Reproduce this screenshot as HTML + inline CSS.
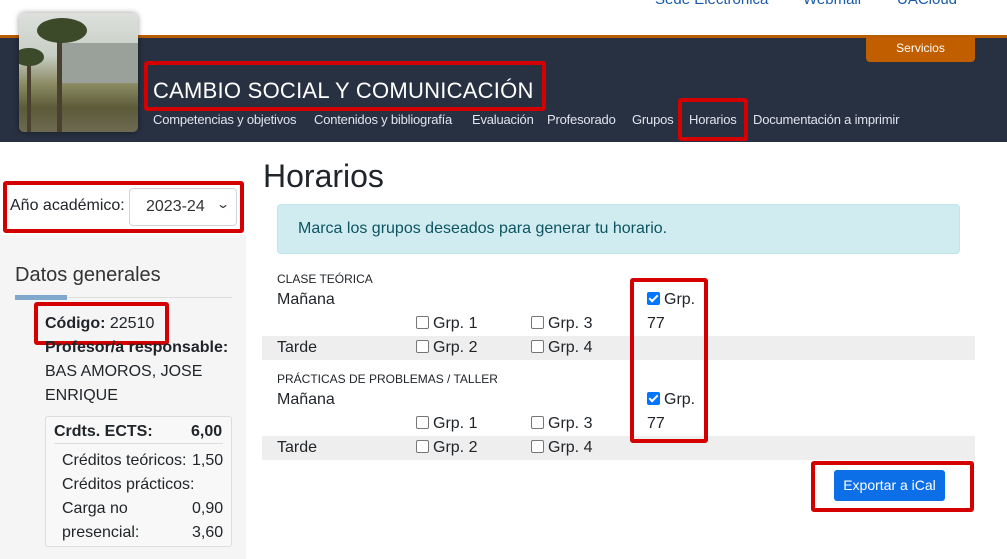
<!DOCTYPE html>
<html><head><meta charset="utf-8"><style>
*{margin:0;padding:0;box-sizing:border-box}
body{width:1007px;height:559px;overflow:hidden;position:relative;background:#fff;font-family:"Liberation Sans",sans-serif;color:#212529}
.a{position:absolute;white-space:nowrap}
.rb{position:absolute;border:4px solid #d40000;border-radius:3px}
.cb{display:inline-block;width:13px;height:13px;border:1px solid #767676;border-radius:2px;background:#fff;vertical-align:-1px;margin-right:4px}
.ck{display:inline-block;width:13px;height:13px;border-radius:2px;background:#0075ff;vertical-align:-1px;margin-right:4px;position:relative}
.ck:after{content:"";position:absolute;left:4px;top:1px;width:3px;height:7px;border:solid #fff;border-width:0 2px 2px 0;transform:rotate(45deg)}
.f16{font-size:16px}
.n{position:absolute;top:112px;font-size:13px;letter-spacing:-0.2px;color:#dfe4ee;white-space:nowrap}
</style></head><body>
<div class="a" style="left:655px;top:-9px;font-size:15px;color:#1a5aa8">Sede Electrónica</div>
<div class="a" style="left:803px;top:-9px;font-size:15px;color:#1a5aa8">Webmail</div>
<div class="a" style="left:897px;top:-9px;font-size:15px;color:#1a5aa8">UACloud</div>
<div class="a" style="left:0;top:35px;width:1007px;height:3px;background:#b85c00"></div>
<div class="a" style="left:0;top:38px;width:1007px;height:104px;background:#283142"></div>
<div class="a" style="left:866px;top:37px;width:109px;height:25px;background:#c05e00;border-radius:0 0 4px 4px;color:#fff;font-size:12px;text-align:center;line-height:22px">Servicios</div>
<div class="a" style="left:19px;top:13px;width:119px;height:119px;border-radius:5px;background:linear-gradient(180deg,#dde0dc 0%,#c8cfc6 35%,#8a8a62 60%,#5c5a38 80%,#6d6a52 100%);box-shadow:0 0 6px rgba(0,0,0,.4);overflow:hidden">
<div style="position:absolute;left:40px;top:30px;width:79px;height:40px;background:#9aa09a"></div>
<div style="position:absolute;left:38px;top:10px;width:5px;height:110px;background:#4a4030"></div>
<div style="position:absolute;left:18px;top:5px;width:50px;height:25px;border-radius:50%;background:#3c4a2a"></div>
<div style="position:absolute;left:8px;top:40px;width:4px;height:80px;background:#4a4030"></div>
<div style="position:absolute;left:-5px;top:35px;width:30px;height:18px;border-radius:50%;background:#3c4a2a"></div>
</div>
<div class="a" style="left:153px;top:78px;font-size:22px;letter-spacing:0.25px;color:#fff">CAMBIO SOCIAL Y COMUNICACIÓN</div>
<div class="rb" style="left:144px;top:61px;width:402px;height:50px"></div>
<div class="n" style="left:153px">Competencias y objetivos</div>
<div class="n" style="left:314px">Contenidos y bibliografía</div>
<div class="n" style="left:472px">Evaluación</div>
<div class="n" style="left:547px">Profesorado</div>
<div class="n" style="left:632px">Grupos</div>
<div class="n" style="left:689px">Horarios</div>
<div class="n" style="left:753px">Documentación a imprimir</div>
<div class="rb" style="left:678px;top:98px;width:70px;height:43px"></div>

<div class="a" style="left:0;top:235px;width:246px;height:324px;background:#f5f5f5"></div>
<div class="a f16" style="left:10px;top:197px">Año académico:</div>
<div class="a" style="left:129px;top:188px;width:108px;height:38px;border:1px solid #ced4da;border-radius:4px;background:#fff;font-size:16px;color:#333;padding:9px 0 0 16px">2023-24<span style="position:absolute;right:8px;top:8px;font-size:12px;transform:scaleX(1.4)">⌄</span></div>
<div class="rb" style="left:3px;top:181px;width:241px;height:52px"></div>
<div class="a" style="left:15px;top:264px;font-size:20px;color:#333">Datos generales</div>
<div class="a" style="left:15px;top:297px;width:217px;height:1px;background:#ddd"></div>
<div class="a" style="left:15px;top:295px;width:52px;height:5px;background:#7fa8cc"></div>
<div class="a f16" style="left:45px;top:315px"><b>Código:</b> 22510</div>
<div class="rb" style="left:34px;top:302px;width:135px;height:43px"></div>
<div class="a f16" style="left:45px;top:339px;font-weight:bold">Profesor/a responsable:</div>
<div class="a f16" style="left:45px;top:363px">BAS AMOROS, JOSE</div>
<div class="a f16" style="left:45px;top:387px">ENRIQUE</div>
<div class="a" style="left:45px;top:416px;width:187px;height:131px;border:1px solid #ddd;border-radius:3px;background:#f8f8f8"></div>
<div class="a f16" style="left:54px;top:423px;font-weight:bold">Crdts. ECTS:</div>
<div class="a f16" style="left:191px;top:423px;font-weight:bold">6,00</div>
<div class="a" style="left:54px;top:443px;width:169px;height:1px;background:#ddd"></div>
<div class="a f16" style="left:62px;top:452px">Créditos teóricos:</div><div class="a f16" style="left:192px;top:452px">1,50</div>
<div class="a f16" style="left:62px;top:476px">Créditos prácticos:</div>
<div class="a f16" style="left:62px;top:500px">Carga no</div><div class="a f16" style="left:192px;top:500px">0,90</div>
<div class="a f16" style="left:62px;top:524px">presencial:</div><div class="a f16" style="left:192px;top:524px">3,60</div>

<div class="a" style="left:263px;top:158px;font-size:32px">Horarios</div>
<div class="a" style="left:277px;top:204px;width:683px;height:50px;background:#d1ecf1;border:1px solid #bee5eb;border-radius:4px;color:#0c5460;font-size:16px;padding:15px 0 0 20px">Marca los grupos deseados para generar tu horario.</div>

<div class="a" style="left:262px;top:336px;width:713px;height:24px;background:#eee"></div>
<div class="a" style="left:262px;top:436px;width:713px;height:24px;background:#eee"></div>
<div class="a" style="left:277px;top:272px;font-size:12px">CLASE TEÓRICA</div>
<div class="a f16" style="left:277px;top:291px">Mañana</div>
<div class="a f16" style="left:647px;top:291px"><span class="ck"></span>Grp.</div>
<div class="a f16" style="left:416px;top:315px"><span class="cb"></span>Grp. 1</div>
<div class="a f16" style="left:531px;top:315px"><span class="cb"></span>Grp. 3</div>
<div class="a f16" style="left:647px;top:315px">77</div>
<div class="a f16" style="left:277px;top:339px">Tarde</div>
<div class="a f16" style="left:416px;top:339px"><span class="cb"></span>Grp. 2</div>
<div class="a f16" style="left:531px;top:339px"><span class="cb"></span>Grp. 4</div>
<div class="a" style="left:277px;top:372px;font-size:12px">PRÁCTICAS DE PROBLEMAS / TALLER</div>
<div class="a f16" style="left:277px;top:391px">Mañana</div>
<div class="a f16" style="left:647px;top:391px"><span class="ck"></span>Grp.</div>
<div class="a f16" style="left:416px;top:415px"><span class="cb"></span>Grp. 1</div>
<div class="a f16" style="left:531px;top:415px"><span class="cb"></span>Grp. 3</div>
<div class="a f16" style="left:647px;top:415px">77</div>
<div class="a f16" style="left:277px;top:439px">Tarde</div>
<div class="a f16" style="left:416px;top:439px"><span class="cb"></span>Grp. 2</div>
<div class="a f16" style="left:531px;top:439px"><span class="cb"></span>Grp. 4</div>
<div class="rb" style="left:630px;top:278px;width:78px;height:165px"></div>
<div class="a" style="left:834px;top:470px;width:111px;height:31px;background:#0d6fe8;border-radius:3px;color:#fff;font-size:14px;text-align:center;line-height:31px">Exportar a iCal</div>
<div class="rb" style="left:811px;top:461px;width:163px;height:51px"></div>
</body></html>
